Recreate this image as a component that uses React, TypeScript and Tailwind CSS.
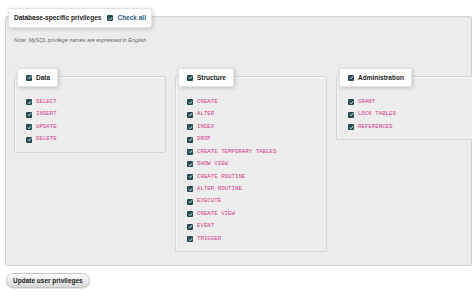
import React from 'react';

const groups = [
  { name: 'Data', items: ['SELECT', 'INSERT', 'UPDATE', 'DELETE'] },
  {
    name: 'Structure',
    items: [
      'CREATE',
      'ALTER',
      'INDEX',
      'DROP',
      'CREATE TEMPORARY TABLES',
      'SHOW VIEW',
      'CREATE ROUTINE',
      'ALTER ROUTINE',
      'EXECUTE',
      'CREATE VIEW',
      'EVENT',
      'TRIGGER',
    ],
  },
  { name: 'Administration', items: ['GRANT', 'LOCK TABLES', 'REFERENCES'] },
];

function Check() {
  return (
    <span className="flex h-[6px] w-[6px] shrink-0 items-center justify-center rounded-[1px] bg-[#244b52]">
      <svg viewBox="0 0 10 10" className="h-[5px] w-[5px]">
        <path d="M2 5.2 L4.2 7.4 L8.2 2.6" fill="none" stroke="#fff" strokeWidth="1.8" />
      </svg>
    </span>
  );
}

export default function App() {
  return (
    <div className="h-[296px] w-[474px] overflow-hidden bg-white pt-[16px] font-['Liberation_Sans',Arial,sans-serif]">
      <div className="ml-[5px] h-[250px] w-[467px] rounded-[2px] border border-[#d3d3d3] bg-[#ececec] shadow-[inset_0_1px_0_#e4e4e4]">
        <div className="-mt-[9px] ml-[2px] flex h-[20px] w-fit items-center rounded-[2px] border border-[#e2e2e2] bg-white pl-[5px] pr-[5px] shadow-[1px_1px_4px_rgba(0,0,0,0.18)]">
          <span className="text-[6.5px] font-bold text-[#222]">Database-specific privileges</span>
          <span className="ml-[6px]">
            <Check />
          </span>
          <span className="ml-[4px] text-[6.5px] font-bold text-[#235a81]">Check all</span>
        </div>
        <p className="ml-[8px] mt-[7px] h-[10px] text-[5.4px] italic leading-[10px] text-[#666]">
          Note: MySQL privilege names are expressed in English.
        </p>
        <div className="ml-[8px] mt-[22px] flex w-[458px] items-start gap-[9px] overflow-hidden pt-[9px]">
          {groups.map((g) => (
            <div
              key={g.name}
              className="w-[152px] shrink-0 rounded-[2px] border border-[#d6d6d6] bg-[#ededed] pb-[6px] shadow-[inset_1px_1px_0_#f6f6f6]"
            >
              <div className="-mt-[9px] ml-[2px] flex h-[19px] w-fit items-center gap-[4px] rounded-[2px] border border-[#e2e2e2] bg-white pl-[8px] pr-[7px] shadow-[1px_1px_4px_rgba(0,0,0,0.18)]">
                <Check />
                <span className="text-[6.5px] font-bold text-[#222]">{g.name}</span>
              </div>
              <div className="mt-[9px] flex flex-col pl-[11px]">
                {g.items.map((it) => (
                  <div key={it} className="flex h-[12.45px] items-center gap-[4px]">
                    <Check />
                    <span className="font-['Liberation_Mono','DejaVu_Sans_Mono',monospace] text-[5.75px] text-[#d4418c]">
                      {it}
                    </span>
                  </div>
                ))}
              </div>
            </div>
          ))}
        </div>
      </div>
      <button className="ml-[6px] mt-[7px] flex h-[15px] items-center rounded-full border border-[#c6c6c6] bg-gradient-to-b from-[#ffffff] to-[#d8d8d8] px-[6px] text-[6.5px] font-bold text-[#222] shadow-[0_1px_1px_rgba(0,0,0,0.12)]">
        Update user privileges
      </button>
    </div>
  );
}
